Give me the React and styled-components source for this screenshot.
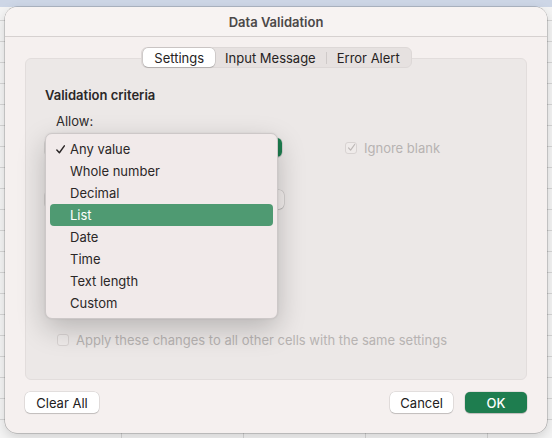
import React from "react";
import styled, {createGlobalStyle} from "styled-components";

const GlobalStyle = createGlobalStyle`
  html, body {
    margin: 0;
    padding: 0;
  }
  body {
    font-family: Inter, "Liberation Sans", Arial, sans-serif;
    font-size: 13px;
    color: #2b2828;
    -webkit-font-smoothing: antialiased;
  }
`;

const Backdrop = styled.div`
  width: 552px;
  height: 438px;
  box-sizing: border-box;
  padding: 7px 5px 5px 5px;
  background:
    linear-gradient(#cdd6e6 0 7px, transparent 7px),
    repeating-linear-gradient(to bottom, transparent 0 20px, #d6d6d6 20px 21px),
    repeating-linear-gradient(to right, transparent 0 121px, #d6d6d6 121px 122px),
    #f4f4f4;
  overflow: hidden;
`;

const Dialog = styled.div`
  width: 542px;
  height: 426px;
  box-sizing: border-box;
  background: #f5f0ef;
  border-radius: 12px;
  box-shadow: 0 0 0 0.5px rgba(0,0,0,0.3), 0 4px 12px rgba(0,0,0,0.15);
  display: flex;
  flex-direction: column;
  overflow: hidden;
`;

const TitleBar = styled.div`
  height: 30px;
  flex-shrink: 0;
  display: flex;
  align-items: center;
  justify-content: center;
  padding-top: 1px;
  box-sizing: border-box;
  border-bottom: 1px solid #d6d1d0;
  background: #f7f3f2;
  font-weight: 600;
  color: #4b4848;
`;

const Body = styled.div`
  flex: 1;
  display: flex;
  flex-direction: column;
  padding: 10px 20px 20px 20px;
`;

const Tabs = styled.div`
  align-self: center;
  margin-left: 1px;
  position: relative;
  z-index: 1;
  display: flex;
  align-items: center;
  height: 21px;
  box-sizing: border-box;
  padding: 1px;
  background: #e6e1e0;
  border: 1px solid #ddd8d7;
  border-radius: 6px;
`;

const Tab = styled.div`
  height: 19px;
  display: flex;
  align-items: center;
  justify-content: center;
  box-sizing: border-box;
  padding: 0 ${props => props.pad || 12}px;
  border-radius: 5px;
  color: #262323;
  background: ${props => props.active ? '#ffffff' : 'transparent'};
  box-shadow: ${props => props.active ? '0 0 0 0.5px rgba(0,0,0,0.18), 0 1px 1px rgba(0,0,0,0.12)' : 'none'};
`;

const TabDivider = styled.div`
  width: 1px;
  height: 12px;
  background: #cfcac9;
`;

const Group = styled.div`
  margin-top: -10px;
  height: 322px;
  box-sizing: border-box;
  background: #ece8e7;
  border: 1px solid #e2dddc;
  border-radius: 6px;
  padding: 28px 20px 31px 19px;
  display: flex;
  flex-direction: column;
`;

const Heading = styled.div`
  font-weight: 600;
  line-height: 16px;
  color: #2a2727;
`;

const Label = styled.div`
  margin-top: 10px;
  padding-left: 11px;
  line-height: 16px;
  color: #2e2b2b;
`;

const CriteriaRow = styled.div`
  margin-top: 9px;
  display: flex;
  align-items: center;
`;

const SelectWrap = styled.div`
  position: relative;
`;

const Select = styled.div`
  width: ${props => props.width}px;
  height: 19px;
  box-sizing: border-box;
  border-radius: 5px;
  background: ${props => props.disabled ? '#f2eeed' : '#ffffff'};
  box-shadow: 0 0 0 0.5px rgba(0,0,0,0.18), 0 1px 1px rgba(0,0,0,0.1);
  display: flex;
  justify-content: flex-end;
  overflow: hidden;
`;

const SelectArrow = styled.div`
  width: 16px;
  height: 100%;
  border-radius: 4px;
  background: #1e7d4f;
`;

const Popup = styled.div`
  position: absolute;
  top: -5px;
  left: 0;
  z-index: 2;
  width: 233px;
  box-sizing: border-box;
  padding: 4px;
  background: #f1eaea;
  border: 1px solid #cdc8c8;
  border-radius: 7px;
  box-shadow: 0 10px 28px rgba(0,0,0,0.22), 0 0 2px rgba(0,0,0,0.1);
`;

const Item = styled.div`
  height: 22px;
  display: flex;
  align-items: center;
  padding-left: 5px;
  border-radius: 4px;
  color: ${props => props.highlighted ? '#ffffff' : '#2b2727'};
  background: ${props => props.highlighted ? '#4f9a72' : 'transparent'};
`;

const Check = styled.span`
  width: 15px;
  flex-shrink: 0;
  display: flex;
  align-items: center;
`;

const CheckRow = styled.label`
  display: flex;
  align-items: center;
  gap: 7px;
  margin-left: ${props => props.offset || 0}px;
  color: #b7b3b2;
`;

const Box = styled.span`
  width: 12px;
  height: 12px;
  box-sizing: border-box;
  border-radius: 3px;
  background: #efebea;
  border: 1px solid #d8d3d2;
  display: flex;
  align-items: center;
  justify-content: center;
`;

const DataSelect = styled.div`
  margin-top: 33px;
`;

const ApplyRow = styled.div`
  margin-top: auto;
  padding-left: 12px;
`;

const Footer = styled.div`
  margin-top: 12px;
  display: flex;
  align-items: center;
  gap: 12px;
`;

const Button = styled.button`
  height: 21px;
  min-width: ${props => props.width || 62}px;
  padding: 0 10px;
  font-family: inherit;
  font-size: 13px;
  border: none;
  border-radius: 5px;
  color: ${props => props.primary ? '#ffffff' : '#222020'};
  background: ${props => props.primary ? '#1e7d4f' : '#ffffff'};
  font-weight: ${props => props.primary ? 500 : 400};
  box-shadow: 0 0 0 0.5px rgba(0,0,0,0.15), 0 1px 1px rgba(0,0,0,0.15);
`;

const Spacer = styled.div`
  flex: 1;
`;

const CheckMark = ({color = '#2b2727', size = 11}) => (
    <svg width={size} height={size} viewBox="0 0 12 12">
        <path d="M2 6.5 L4.8 9.5 L10.2 2" fill="none" stroke={color} strokeWidth="1.6"
              strokeLinecap="round" strokeLinejoin="round"/>
    </svg>
);

const options = ['Any value', 'Whole number', 'Decimal', 'List', 'Date', 'Time', 'Text length', 'Custom'];

export default function App() {
    return (
        <Backdrop>
            <GlobalStyle/>
            <Dialog>
                <TitleBar>Data Validation</TitleBar>
                <Body>
                    <Tabs>
                        <Tab active pad={11}>Settings</Tab>
                        <Tab pad={10}>Input Message</Tab>
                        <TabDivider/>
                        <Tab pad={10}>Error Alert</Tab>
                    </Tabs>
                    <Group>
                        <Heading>Validation criteria</Heading>
                        <Label>Allow:</Label>
                        <CriteriaRow>
                            <SelectWrap>
                                <Select width={237}>
                                    <SelectArrow/>
                                </Select>
                                <Popup>
                                    {options.map(option => (
                                        <Item key={option} highlighted={option === 'List'}>
                                            <Check>{option === 'Any value' && <CheckMark/>}</Check>
                                            {option}
                                        </Item>
                                    ))}
                                </Popup>
                            </SelectWrap>
                            <CheckRow offset={63}>
                                <Box><CheckMark color="#bdb8b7" size={9}/></Box>
                                Ignore blank
                            </CheckRow>
                        </CriteriaRow>
                        <DataSelect>
                            <Select width={239} disabled/>
                        </DataSelect>
                        <ApplyRow>
                            <CheckRow>
                                <Box/>
                                Apply these changes to all other cells with the same settings
                            </CheckRow>
                        </ApplyRow>
                    </Group>
                    <Footer>
                        <Button width={74}>Clear All</Button>
                        <Spacer/>
                        <Button>Cancel</Button>
                        <Button primary>OK</Button>
                    </Footer>
                </Body>
            </Dialog>
        </Backdrop>
    );
}
